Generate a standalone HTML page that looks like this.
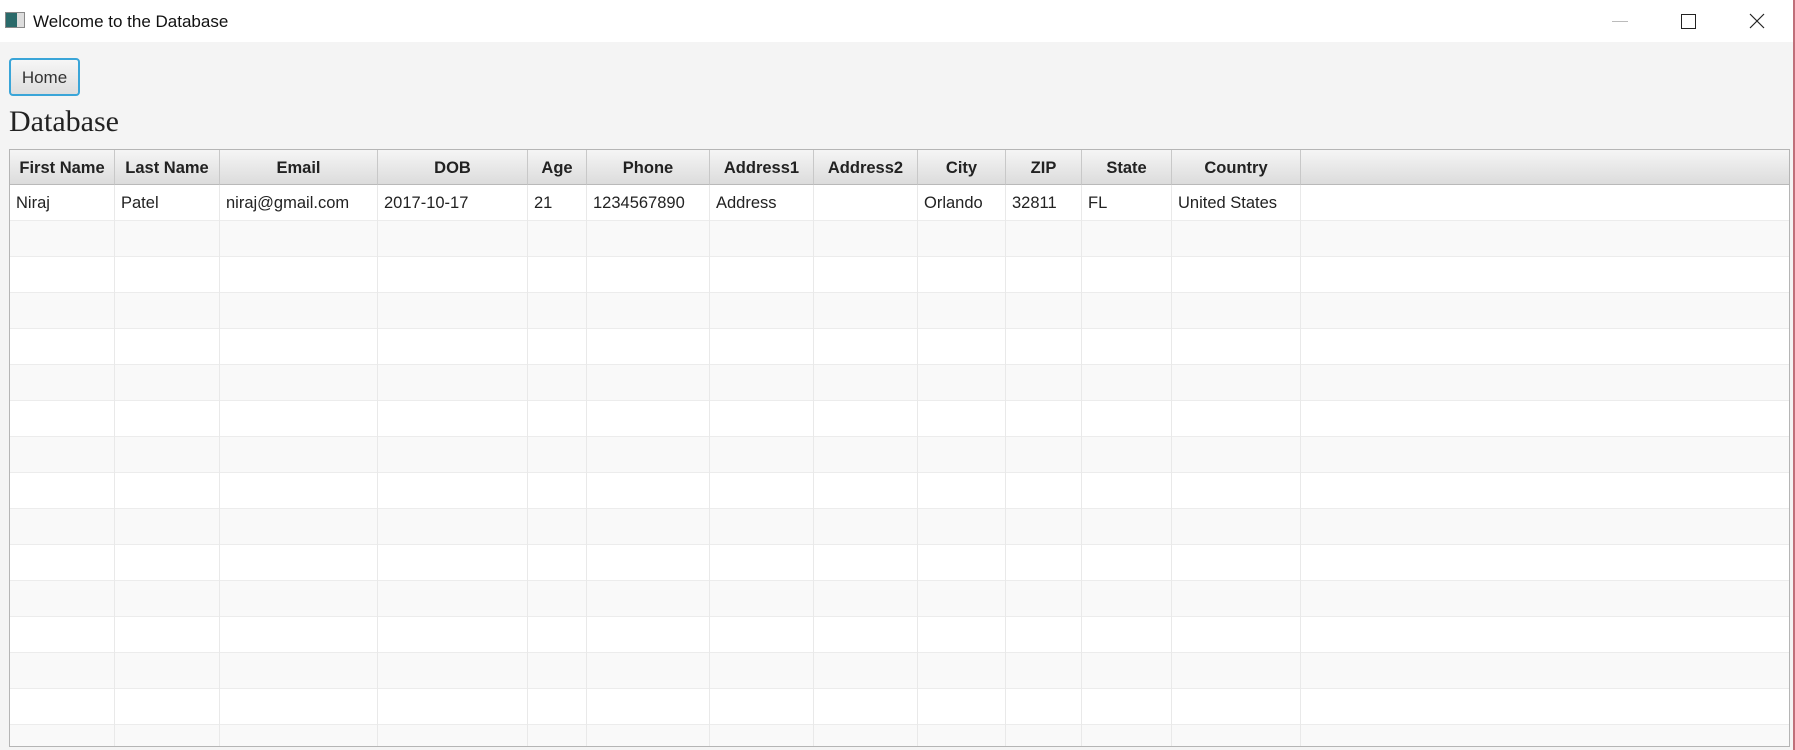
<!DOCTYPE html>
<html><head><style>
body{margin:0;width:1795px;height:750px;overflow:hidden;background:#f4f4f4;font-family:"Liberation Sans",sans-serif;position:relative}
.title{position:absolute;left:0;top:0;width:1795px;height:42px;background:#fff}
.title .t{position:absolute;left:33px;top:12px;font-size:17px;color:#111}
.icon{position:absolute;left:5px;top:12px;width:18px;height:14px;border:1px solid #888;background:linear-gradient(90deg,#2a6a6a 0 60%,#ddd 60%)}
.rb{position:absolute;right:0;top:0;width:2px;height:750px;background:#c0707a}
.btn{position:absolute;left:9px;top:58px;width:71px;height:38px;border:2px solid #3aa5d8;border-radius:4px;background:linear-gradient(#f6f6f6,#dedede);box-sizing:border-box;font-size:17px;color:#333;text-align:center;line-height:35px}
.h1{position:absolute;left:9px;top:105px;font-family:"Liberation Serif",serif;font-size:30px;color:#222}
.tbl{position:absolute;left:9px;top:149px;width:1781px;height:598px;border:1px solid #b5b5b5;box-sizing:border-box;background:#fff;overflow:hidden}
.hd{position:absolute;top:0;height:35px;background:linear-gradient(#f5f5f5,#dcdcdc);border-right:1px solid #c8c8c8;border-bottom:1px solid #b9b9b9;box-sizing:border-box;font-weight:bold;font-size:16.5px;color:#222;text-align:center;line-height:37px}
.row{position:absolute;left:0;width:1781px;height:36px;border-bottom:1px solid #ececec;box-sizing:border-box}
.vl{position:absolute;top:35px;bottom:0;width:1px;background:#e9e9e9}
.c{position:absolute;top:44px;font-size:16.5px;color:#222}
</style></head><body>
<div class="title"><div class="icon"></div><div class="t">Welcome to the Database</div>
<div style="position:absolute;left:1612px;top:21px;width:16px;height:1px;background:#bbb"></div>
<div style="position:absolute;left:1681px;top:14px;width:13px;height:13px;border:1px solid #222"></div>
<svg style="position:absolute;left:1749px;top:13px" width="16" height="16"><path d="M1 1L15 15M15 1L1 15" stroke="#222" stroke-width="1.2"/></svg>
</div>
<div class="btn">Home</div>
<div class="h1">Database</div>
<div class="tbl">
<div class="row" style="top:35px;background:#fff"></div>
<div class="row" style="top:71px;background:#f9f9f9"></div>
<div class="row" style="top:107px;background:#fff"></div>
<div class="row" style="top:143px;background:#f9f9f9"></div>
<div class="row" style="top:179px;background:#fff"></div>
<div class="row" style="top:215px;background:#f9f9f9"></div>
<div class="row" style="top:251px;background:#fff"></div>
<div class="row" style="top:287px;background:#f9f9f9"></div>
<div class="row" style="top:323px;background:#fff"></div>
<div class="row" style="top:359px;background:#f9f9f9"></div>
<div class="row" style="top:395px;background:#fff"></div>
<div class="row" style="top:431px;background:#f9f9f9"></div>
<div class="row" style="top:467px;background:#fff"></div>
<div class="row" style="top:503px;background:#f9f9f9"></div>
<div class="row" style="top:539px;background:#fff"></div>
<div class="row" style="top:575px;background:#f9f9f9"></div>
<div class="hd" style="left:0;width:105px">First Name</div>
<div class="hd" style="left:105px;width:105px">Last Name</div>
<div class="hd" style="left:210px;width:158px">Email</div>
<div class="hd" style="left:368px;width:150px">DOB</div>
<div class="hd" style="left:518px;width:59px">Age</div>
<div class="hd" style="left:577px;width:123px">Phone</div>
<div class="hd" style="left:700px;width:104px">Address1</div>
<div class="hd" style="left:804px;width:104px">Address2</div>
<div class="hd" style="left:908px;width:88px">City</div>
<div class="hd" style="left:996px;width:76px">ZIP</div>
<div class="hd" style="left:1072px;width:90px">State</div>
<div class="hd" style="left:1162px;width:129px">Country</div>
<div class="hd" style="left:1291px;width:490px;border-right:none"></div>
<div class="vl" style="left:104px"></div><div class="vl" style="left:209px"></div><div class="vl" style="left:367px"></div><div class="vl" style="left:517px"></div><div class="vl" style="left:576px"></div><div class="vl" style="left:699px"></div><div class="vl" style="left:803px"></div><div class="vl" style="left:907px"></div><div class="vl" style="left:995px"></div><div class="vl" style="left:1071px"></div><div class="vl" style="left:1161px"></div><div class="vl" style="left:1290px"></div>
<div class="c" style="left:6px">Niraj</div>
<div class="c" style="left:111px">Patel</div>
<div class="c" style="left:216px">niraj@gmail.com</div>
<div class="c" style="left:374px">2017-10-17</div>
<div class="c" style="left:524px">21</div>
<div class="c" style="left:583px">1234567890</div>
<div class="c" style="left:706px">Address</div>
<div class="c" style="left:914px">Orlando</div>
<div class="c" style="left:1002px">32811</div>
<div class="c" style="left:1078px">FL</div>
<div class="c" style="left:1168px">United States</div>
</div>
<div class="rb"></div>
</body></html>
